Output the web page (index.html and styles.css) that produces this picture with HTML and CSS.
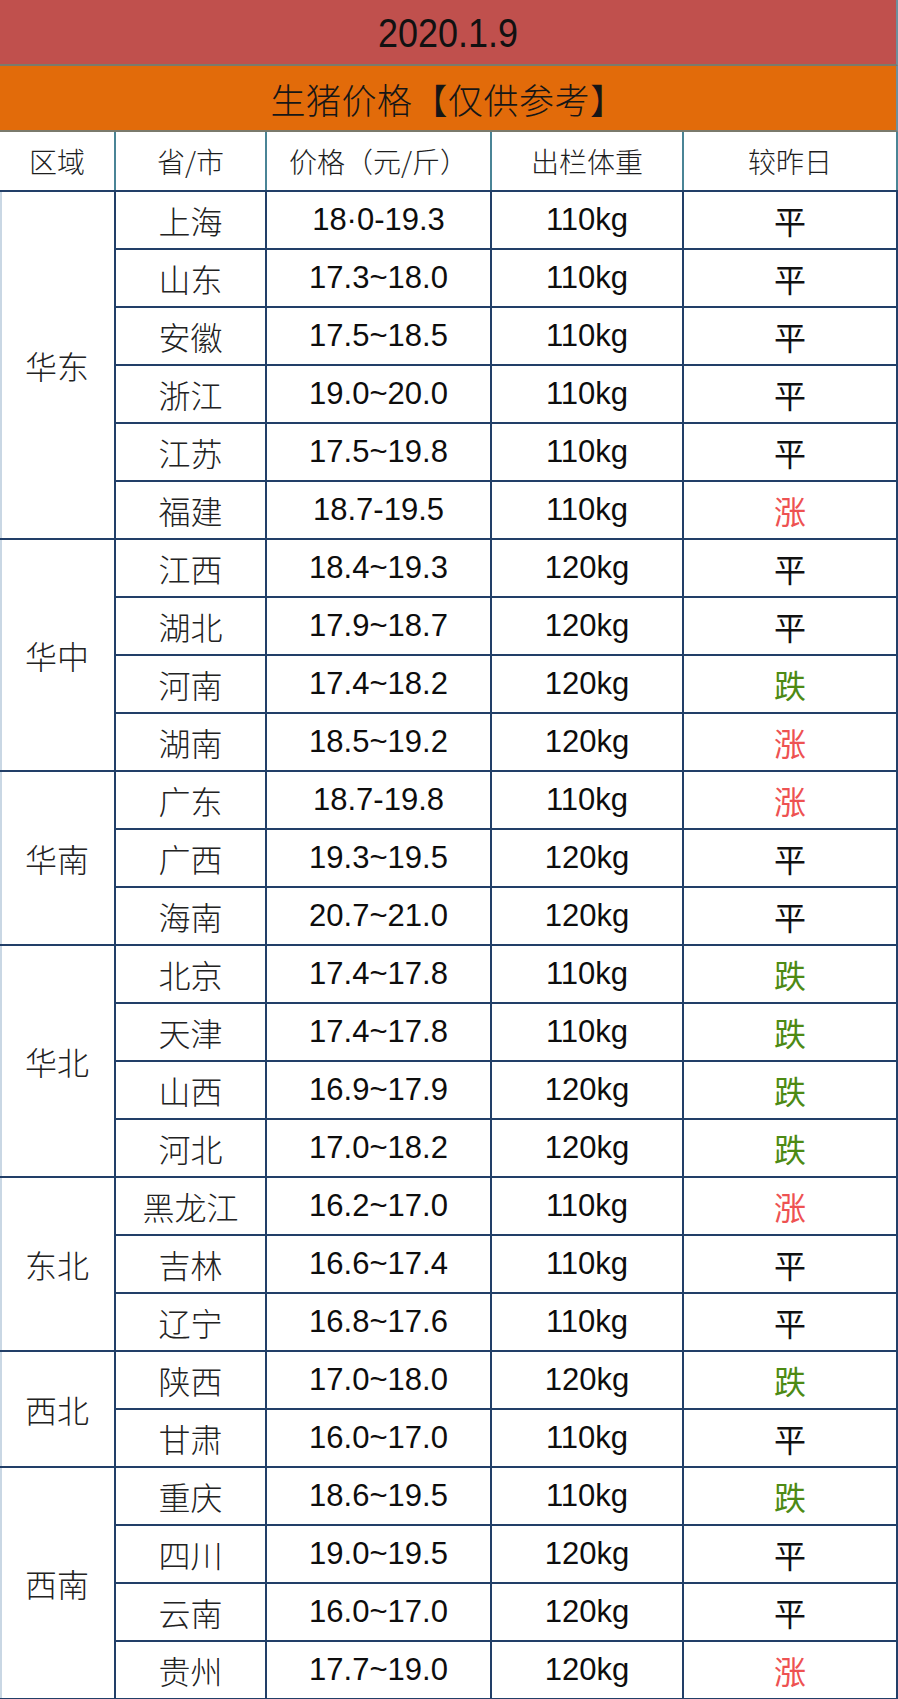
FILE: index.html
```html
<!DOCTYPE html>
<html lang="zh-CN">
<head>
<meta charset="utf-8">
<title>生猪价格 2020.1.9</title>
<link rel="stylesheet" href="styles.css">
</head>
<body>
<div class="sheet">
  <div class="band band-date"><span class="date">2020.1.9</span></div>
  <div class="band band-title">生猪价格【仅供参考】</div>
  <div class="head">
    <div class="hc">区域</div>
    <div class="hc">省/市</div>
    <div class="hc">价格（元/斤）</div>
    <div class="hc">出栏体重</div>
    <div class="hc">较昨日</div>
  </div>
  <div class="grid">
    <div class="c region span6">华东</div>
    <div class="c prov">上海</div><div class="c num">18·0-19.3</div><div class="c num">110kg</div><div class="c chg">平</div>
    <div class="c prov">山东</div><div class="c num">17.3~18.0</div><div class="c num">110kg</div><div class="c chg">平</div>
    <div class="c prov">安徽</div><div class="c num">17.5~18.5</div><div class="c num">110kg</div><div class="c chg">平</div>
    <div class="c prov">浙江</div><div class="c num">19.0~20.0</div><div class="c num">110kg</div><div class="c chg">平</div>
    <div class="c prov">江苏</div><div class="c num">17.5~19.8</div><div class="c num">110kg</div><div class="c chg">平</div>
    <div class="c prov">福建</div><div class="c num">18.7-19.5</div><div class="c num">110kg</div><div class="c chg up">涨</div>

    <div class="c region span4">华中</div>
    <div class="c prov">江西</div><div class="c num">18.4~19.3</div><div class="c num">120kg</div><div class="c chg">平</div>
    <div class="c prov">湖北</div><div class="c num">17.9~18.7</div><div class="c num">120kg</div><div class="c chg">平</div>
    <div class="c prov">河南</div><div class="c num">17.4~18.2</div><div class="c num">120kg</div><div class="c chg down">跌</div>
    <div class="c prov">湖南</div><div class="c num">18.5~19.2</div><div class="c num">120kg</div><div class="c chg up">涨</div>

    <div class="c region span3">华南</div>
    <div class="c prov">广东</div><div class="c num">18.7-19.8</div><div class="c num">110kg</div><div class="c chg up">涨</div>
    <div class="c prov">广西</div><div class="c num">19.3~19.5</div><div class="c num">120kg</div><div class="c chg">平</div>
    <div class="c prov">海南</div><div class="c num">20.7~21.0</div><div class="c num">120kg</div><div class="c chg">平</div>

    <div class="c region span4">华北</div>
    <div class="c prov">北京</div><div class="c num">17.4~17.8</div><div class="c num">110kg</div><div class="c chg down">跌</div>
    <div class="c prov">天津</div><div class="c num">17.4~17.8</div><div class="c num">110kg</div><div class="c chg down">跌</div>
    <div class="c prov">山西</div><div class="c num">16.9~17.9</div><div class="c num">120kg</div><div class="c chg down">跌</div>
    <div class="c prov">河北</div><div class="c num">17.0~18.2</div><div class="c num">120kg</div><div class="c chg down">跌</div>

    <div class="c region span3">东北</div>
    <div class="c prov">黑龙江</div><div class="c num">16.2~17.0</div><div class="c num">110kg</div><div class="c chg up">涨</div>
    <div class="c prov">吉林</div><div class="c num">16.6~17.4</div><div class="c num">110kg</div><div class="c chg">平</div>
    <div class="c prov">辽宁</div><div class="c num">16.8~17.6</div><div class="c num">110kg</div><div class="c chg">平</div>

    <div class="c region span2">西北</div>
    <div class="c prov">陕西</div><div class="c num">17.0~18.0</div><div class="c num">120kg</div><div class="c chg down">跌</div>
    <div class="c prov">甘肃</div><div class="c num">16.0~17.0</div><div class="c num">110kg</div><div class="c chg">平</div>

    <div class="c region span4">西南</div>
    <div class="c prov">重庆</div><div class="c num">18.6~19.5</div><div class="c num">110kg</div><div class="c chg down">跌</div>
    <div class="c prov">四川</div><div class="c num">19.0~19.5</div><div class="c num">120kg</div><div class="c chg">平</div>
    <div class="c prov">云南</div><div class="c num">16.0~17.0</div><div class="c num">120kg</div><div class="c chg">平</div>
    <div class="c prov">贵州</div><div class="c num">17.7~19.0</div><div class="c num">120kg</div><div class="c chg up">涨</div>
  </div>
</div>
</body>
</html>
```

FILE: styles.css
```css
html, body {
  margin: 0;
  padding: 0;
  background: #ffffff;
}

.sheet {
  width: 898px;
  font-family: "Noto Sans CJK SC", "Liberation Sans", sans-serif;
  color: #1a1a1a;
}

.band {
  box-sizing: border-box;
  height: 66px;
  border-bottom: 2px solid #7a7a6c;
  border-right: 2px solid #6f8f9c;
  display: flex;
  align-items: center;
  justify-content: center;
}

.band-date {
  background: #c0504d;
}

.date {
  font-family: "Liberation Sans", sans-serif;
  font-size: 36px;
  color: #111111;
  display: inline-block;
  transform: scaleY(1.14);
  padding-top: 2px;
}

.band-title {
  background: #e26b0a;
  font-size: 35px;
  font-weight: 300;
  color: #161616;
  letter-spacing: 0.5px;
}

.head {
  box-sizing: border-box;
  display: grid;
  grid-template-columns: 114px 149px 223px 190px 212px;
  column-gap: 2px;
  padding-right: 2px;
  background: #4a8496;
  border-bottom: 2px solid #223f68;
}

.hc {
  background: #ffffff;
  height: 58px;
  display: flex;
  align-items: center;
  justify-content: center;
  font-size: 28px;
  font-weight: 300;
  color: #1e1e1e;
}

.grid {
  box-sizing: border-box;
  display: grid;
  grid-template-columns: 114px 149px 223px 190px 212px;
  grid-auto-rows: 56px;
  gap: 2px;
  padding: 0 2px 2px 0;
  background: #223f68;
}

.c {
  background: #ffffff;
  display: flex;
  align-items: center;
  justify-content: center;
}

.region {
  grid-column: 1;
  font-size: 32px;
  font-weight: 300;
  color: #222222;
  box-shadow: inset 2px 0 0 #c9d7e4;
}

.span2 { grid-row: span 2; }
.span3 { grid-row: span 3; }
.span4 { grid-row: span 4; }
.span6 { grid-row: span 6; }

.prov {
  font-size: 32px;
  font-weight: 300;
  color: #222222;
}

.num {
  font-family: "Liberation Sans", sans-serif;
  font-size: 31px;
  color: #0d0d0d;
}

.chg {
  font-size: 32px;
  font-weight: 400;
  color: #111111;
}

.up {
  color: #ee5252;
}

.down {
  color: #4d8a14;
}
```
